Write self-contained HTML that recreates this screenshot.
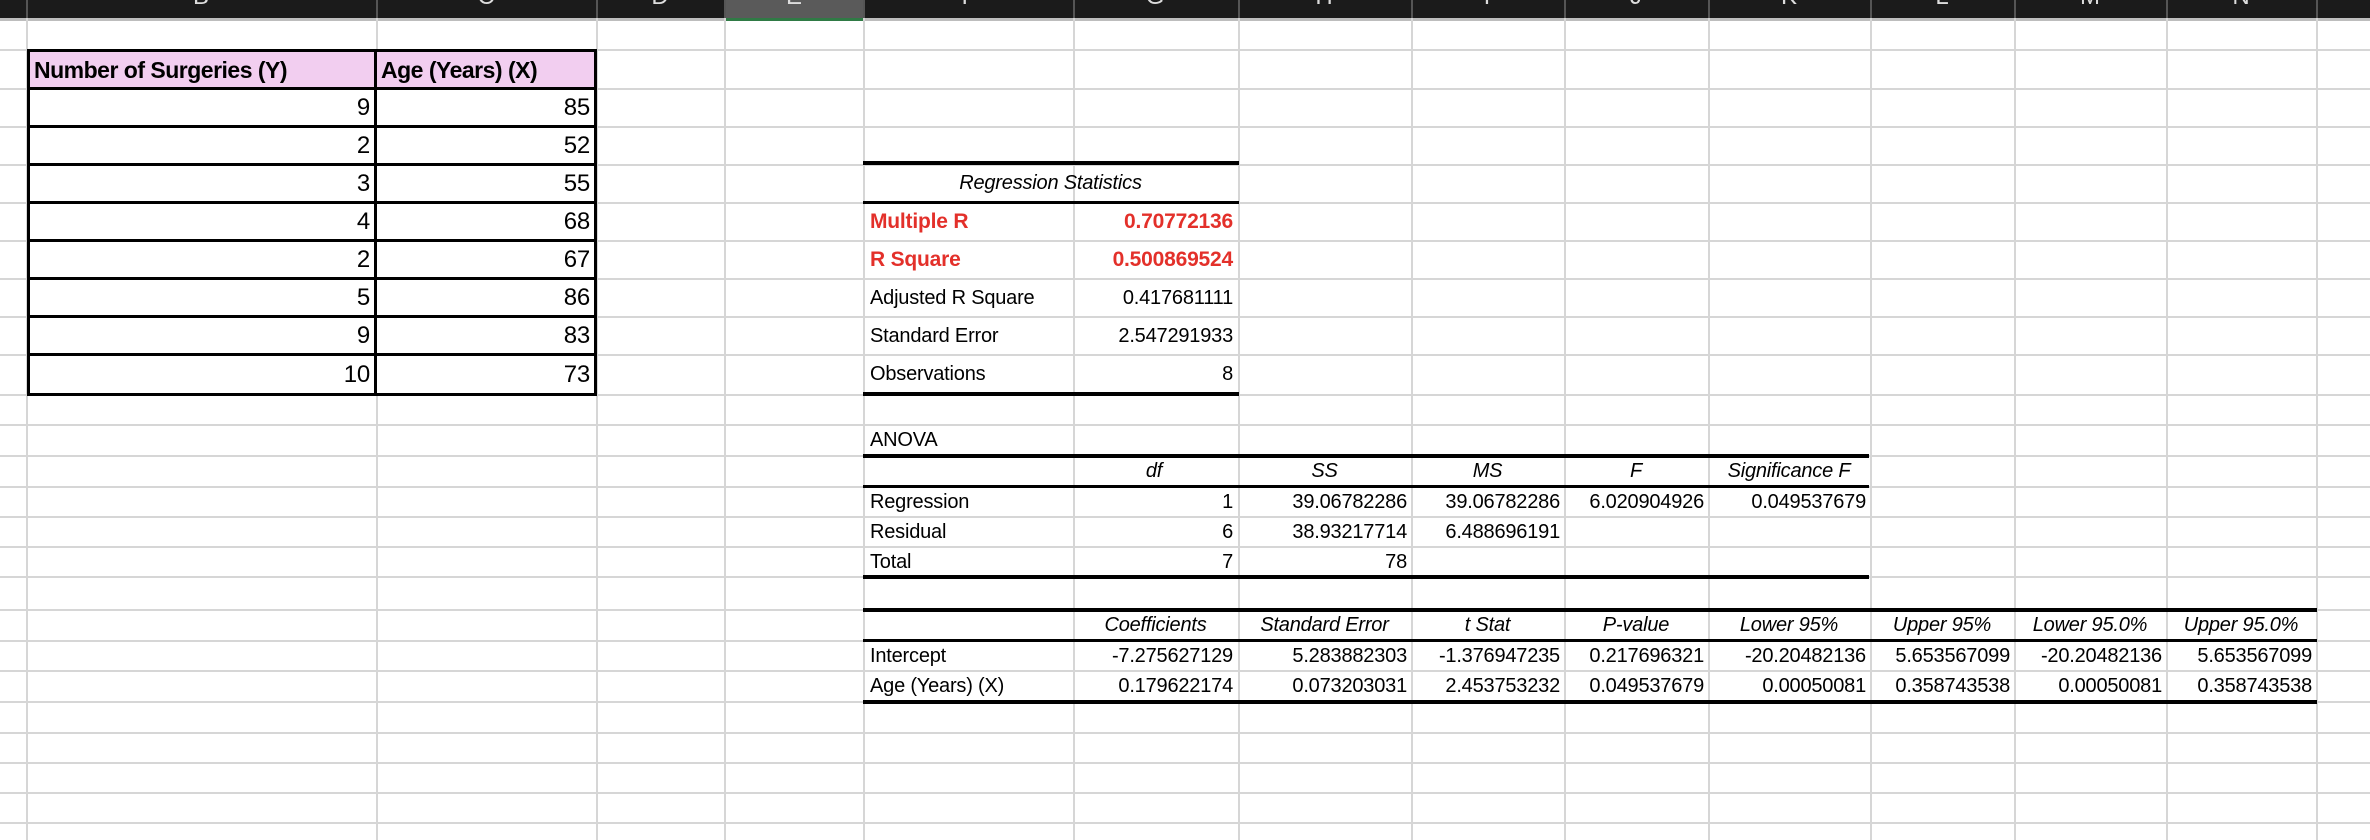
<!DOCTYPE html>
<html><head><meta charset="utf-8"><style>
*{margin:0;padding:0;box-sizing:border-box}
body{width:2370px;height:840px;overflow:hidden;background:#fff;position:relative;font-family:"Liberation Sans Narrow","Liberation Sans",sans-serif;color:#000}
.v{position:absolute;top:18px;bottom:0;width:2px;background:#d6d6d6}
.h{position:absolute;left:0;right:0;height:2px;background:#d6d6d6}
.bar{position:absolute;left:0;top:0;width:2370px;height:18px;background:#1b1b1b;overflow:hidden}
.bar i{position:absolute;top:0;height:18px;width:2px;background:#555}
.bar b{position:absolute;top:-17px;font:24px "Liberation Sans",sans-serif;color:#ddd;transform:translateX(-50%)}
.t{position:absolute;white-space:nowrap;font-size:20px;letter-spacing:-0.2px}
.r{text-align:right}.c{text-align:center}.it{font-style:italic}
.red{color:#e3302a;font-weight:bold}
.k{position:absolute;background:#000}
.big{font-size:24px}
</style></head><body>
<div class="bar">
<i style="left:26px"></i><i style="left:376px"></i><i style="left:596px"></i><i style="left:724px"></i><i style="left:863px"></i><i style="left:1073px"></i><i style="left:1238px"></i><i style="left:1411px"></i><i style="left:1564px"></i><i style="left:1708px"></i><i style="left:1870px"></i><i style="left:2014px"></i><i style="left:2166px"></i><i style="left:2316px"></i>
<div style="position:absolute;left:726px;top:0;width:137px;height:18px;background:#5a5a5a"></div>
<b style="left:201px">B</b><b style="left:486px">C</b><b style="left:660px">D</b><b style="left:794px">E</b><b style="left:969px">F</b><b style="left:1155px">G</b><b style="left:1324px">H</b><b style="left:1487px">I</b><b style="left:1636px">J</b><b style="left:1789px">K</b><b style="left:1942px">L</b><b style="left:2090px">M</b><b style="left:2241px">N</b>
</div>
<div style="position:absolute;left:0;top:18px;width:2370px;height:3px;background:#bdbdbd"></div>
<div style="position:absolute;left:726px;top:18px;width:137px;height:3px;background:#2f7a45"></div>

<div class="v" style="left:26px"></div><div class="v" style="left:376px"></div><div class="v" style="left:596px"></div><div class="v" style="left:724px"></div><div class="v" style="left:863px"></div><div class="v" style="left:1073px"></div><div class="v" style="left:1238px"></div><div class="v" style="left:1411px"></div><div class="v" style="left:1564px"></div><div class="v" style="left:1708px"></div><div class="v" style="left:1870px"></div><div class="v" style="left:2014px"></div><div class="v" style="left:2166px"></div><div class="v" style="left:2316px"></div>

<div class="h" style="top:49px"></div><div class="h" style="top:88px"></div><div class="h" style="top:126px"></div><div class="h" style="top:164px"></div><div class="h" style="top:202px"></div><div class="h" style="top:240px"></div><div class="h" style="top:278px"></div><div class="h" style="top:316px"></div><div class="h" style="top:354px"></div><div class="h" style="top:394px"></div><div class="h" style="top:424px"></div><div class="h" style="top:455px"></div><div class="h" style="top:486px"></div><div class="h" style="top:516px"></div><div class="h" style="top:546px"></div><div class="h" style="top:576px"></div><div class="h" style="top:609px"></div><div class="h" style="top:640px"></div><div class="h" style="top:670px"></div><div class="h" style="top:701px"></div><div class="h" style="top:732px"></div><div class="h" style="top:762px"></div><div class="h" style="top:792px"></div><div class="h" style="top:822px"></div>

<!-- Table 1 -->
<div style="position:absolute;left:27px;top:49px;width:570px;height:347px;background:#fff"></div>
<div style="position:absolute;left:27px;top:49px;width:570px;height:40px;background:#f2cef0"></div>
<div class="k" style="left:27px;top:49px;width:3px;height:347px"></div>
<div class="k" style="left:374px;top:49px;width:3px;height:347px"></div>
<div class="k" style="left:594px;top:49px;width:3px;height:347px"></div>
<div class="k" style="left:27px;top:49px;width:570px;height:3px"></div>
<div class="k" style="left:27px;top:87px;width:570px;height:3px"></div>
<div class="k" style="left:27px;top:125px;width:570px;height:3px"></div>
<div class="k" style="left:27px;top:163px;width:570px;height:3px"></div>
<div class="k" style="left:27px;top:201px;width:570px;height:3px"></div>
<div class="k" style="left:27px;top:239px;width:570px;height:3px"></div>
<div class="k" style="left:27px;top:277px;width:570px;height:3px"></div>
<div class="k" style="left:27px;top:315px;width:570px;height:3px"></div>
<div class="k" style="left:27px;top:353px;width:570px;height:3px"></div>
<div class="k" style="left:27px;top:393px;width:570px;height:3px"></div>
<div class="t" style="left:34px;top:52px;line-height:36px;font-size:23px;font-weight:bold;letter-spacing:-0.5px">Number of Surgeries (Y)</div>
<div class="t" style="left:381px;top:52px;line-height:36px;font-size:23px;font-weight:bold;letter-spacing:-0.5px">Age (Years) (X)</div>
<div class="t r big" style="left:200px;width:170px;top:90px;line-height:36px">9</div>
<div class="t r big" style="left:400px;width:190px;top:90px;line-height:36px">85</div>
<div class="t r big" style="left:200px;width:170px;top:128px;line-height:36px">2</div>
<div class="t r big" style="left:400px;width:190px;top:128px;line-height:36px">52</div>
<div class="t r big" style="left:200px;width:170px;top:166px;line-height:36px">3</div>
<div class="t r big" style="left:400px;width:190px;top:166px;line-height:36px">55</div>
<div class="t r big" style="left:200px;width:170px;top:204px;line-height:36px">4</div>
<div class="t r big" style="left:400px;width:190px;top:204px;line-height:36px">68</div>
<div class="t r big" style="left:200px;width:170px;top:242px;line-height:36px">2</div>
<div class="t r big" style="left:400px;width:190px;top:242px;line-height:36px">67</div>
<div class="t r big" style="left:200px;width:170px;top:280px;line-height:36px">5</div>
<div class="t r big" style="left:400px;width:190px;top:280px;line-height:36px">86</div>
<div class="t r big" style="left:200px;width:170px;top:318px;line-height:36px">9</div>
<div class="t r big" style="left:400px;width:190px;top:318px;line-height:36px">83</div>
<div class="t r big" style="left:200px;width:170px;top:356px;line-height:38px">10</div>
<div class="t r big" style="left:400px;width:190px;top:356px;line-height:38px">73</div>

<!-- Regression statistics -->
<div class="k" style="left:863px;top:161px;width:376px;height:4px"></div>
<div class="k" style="left:863px;top:201px;width:376px;height:3px"></div>
<div class="k" style="left:863px;top:392px;width:376px;height:4px"></div>
<div class="t c it" style="left:863px;width:375px;top:165px;line-height:36px">Regression Statistics</div>
<div class="t red" style="left:870px;top:204px;line-height:36px;font-size:21px">Multiple R</div>
<div class="t r red" style="left:1075px;width:158px;top:204px;line-height:36px;font-size:21px">0.70772136</div>
<div class="t red" style="left:870px;top:242px;line-height:36px;font-size:21px">R Square</div>
<div class="t r red" style="left:1075px;width:158px;top:242px;line-height:36px;font-size:21px">0.500869524</div>
<div class="t" style="left:870px;top:280px;line-height:36px">Adjusted R Square</div>
<div class="t r" style="left:1075px;width:158px;top:280px;line-height:36px">0.417681111</div>
<div class="t" style="left:870px;top:318px;line-height:36px">Standard Error</div>
<div class="t r" style="left:1075px;width:158px;top:318px;line-height:36px">2.547291933</div>
<div class="t" style="left:870px;top:356px;line-height:36px">Observations</div>
<div class="t r" style="left:1075px;width:158px;top:356px;line-height:36px">8</div>

<!-- ANOVA -->
<div class="t" style="left:870px;top:425px;line-height:30px">ANOVA</div>
<div class="k" style="left:863px;top:454px;width:1006px;height:4px"></div>
<div class="k" style="left:863px;top:485px;width:1006px;height:3px"></div>
<div class="k" style="left:863px;top:575px;width:1006px;height:4px"></div>
<div class="t c it" style="left:1075px;width:158px;top:457px;line-height:29px">df</div>
<div class="t c it" style="left:1238px;width:173px;top:457px;line-height:29px">SS</div>
<div class="t c it" style="left:1411px;width:153px;top:457px;line-height:29px">MS</div>
<div class="t c it" style="left:1564px;width:144px;top:457px;line-height:29px">F</div>
<div class="t c it" style="left:1708px;width:162px;top:457px;line-height:29px">Significance F</div>
<div class="t" style="left:870px;top:487px;line-height:30px">Regression</div>
<div class="t r" style="left:1075px;width:158px;top:487px;line-height:30px">1</div>
<div class="t r" style="left:1240px;width:167px;top:487px;line-height:30px">39.06782286</div>
<div class="t r" style="left:1413px;width:147px;top:487px;line-height:30px">39.06782286</div>
<div class="t r" style="left:1566px;width:138px;top:487px;line-height:30px">6.020904926</div>
<div class="t r" style="left:1710px;width:156px;top:487px;line-height:30px">0.049537679</div>
<div class="t" style="left:870px;top:517px;line-height:30px">Residual</div>
<div class="t r" style="left:1075px;width:158px;top:517px;line-height:30px">6</div>
<div class="t r" style="left:1240px;width:167px;top:517px;line-height:30px">38.93217714</div>
<div class="t r" style="left:1413px;width:147px;top:517px;line-height:30px">6.488696191</div>
<div class="t" style="left:870px;top:547px;line-height:30px">Total</div>
<div class="t r" style="left:1075px;width:158px;top:547px;line-height:30px">7</div>
<div class="t r" style="left:1240px;width:167px;top:547px;line-height:30px">78</div>

<!-- Coefficients -->
<div class="k" style="left:863px;top:608px;width:1454px;height:4px"></div>
<div class="k" style="left:863px;top:639px;width:1454px;height:3px"></div>
<div class="k" style="left:863px;top:700px;width:1454px;height:4px"></div>
<div class="t c it" style="left:1073px;width:165px;top:611px;line-height:29px">Coefficients</div>
<div class="t c it" style="left:1238px;width:173px;top:611px;line-height:29px">Standard Error</div>
<div class="t c it" style="left:1411px;width:153px;top:611px;line-height:29px">t Stat</div>
<div class="t c it" style="left:1564px;width:144px;top:611px;line-height:29px">P-value</div>
<div class="t c it" style="left:1708px;width:162px;top:611px;line-height:29px">Lower 95%</div>
<div class="t c it" style="left:1870px;width:144px;top:611px;line-height:29px">Upper 95%</div>
<div class="t c it" style="left:2014px;width:152px;top:611px;line-height:29px">Lower 95.0%</div>
<div class="t c it" style="left:2166px;width:150px;top:611px;line-height:29px">Upper 95.0%</div>
<div class="t" style="left:870px;top:641px;line-height:30px">Intercept</div>
<div class="t r" style="left:1075px;width:158px;top:641px;line-height:30px">-7.275627129</div>
<div class="t r" style="left:1240px;width:167px;top:641px;line-height:30px">5.283882303</div>
<div class="t r" style="left:1413px;width:147px;top:641px;line-height:30px">-1.376947235</div>
<div class="t r" style="left:1566px;width:138px;top:641px;line-height:30px">0.217696321</div>
<div class="t r" style="left:1710px;width:156px;top:641px;line-height:30px">-20.20482136</div>
<div class="t r" style="left:1872px;width:138px;top:641px;line-height:30px">5.653567099</div>
<div class="t r" style="left:2016px;width:146px;top:641px;line-height:30px">-20.20482136</div>
<div class="t r" style="left:2168px;width:144px;top:641px;line-height:30px">5.653567099</div>
<div class="t" style="left:870px;top:671px;line-height:30px">Age (Years) (X)</div>
<div class="t r" style="left:1075px;width:158px;top:671px;line-height:30px">0.179622174</div>
<div class="t r" style="left:1240px;width:167px;top:671px;line-height:30px">0.073203031</div>
<div class="t r" style="left:1413px;width:147px;top:671px;line-height:30px">2.453753232</div>
<div class="t r" style="left:1566px;width:138px;top:671px;line-height:30px">0.049537679</div>
<div class="t r" style="left:1710px;width:156px;top:671px;line-height:30px">0.00050081</div>
<div class="t r" style="left:1872px;width:138px;top:671px;line-height:30px">0.358743538</div>
<div class="t r" style="left:2016px;width:146px;top:671px;line-height:30px">0.00050081</div>
<div class="t r" style="left:2168px;width:144px;top:671px;line-height:30px">0.358743538</div>
</body></html>
